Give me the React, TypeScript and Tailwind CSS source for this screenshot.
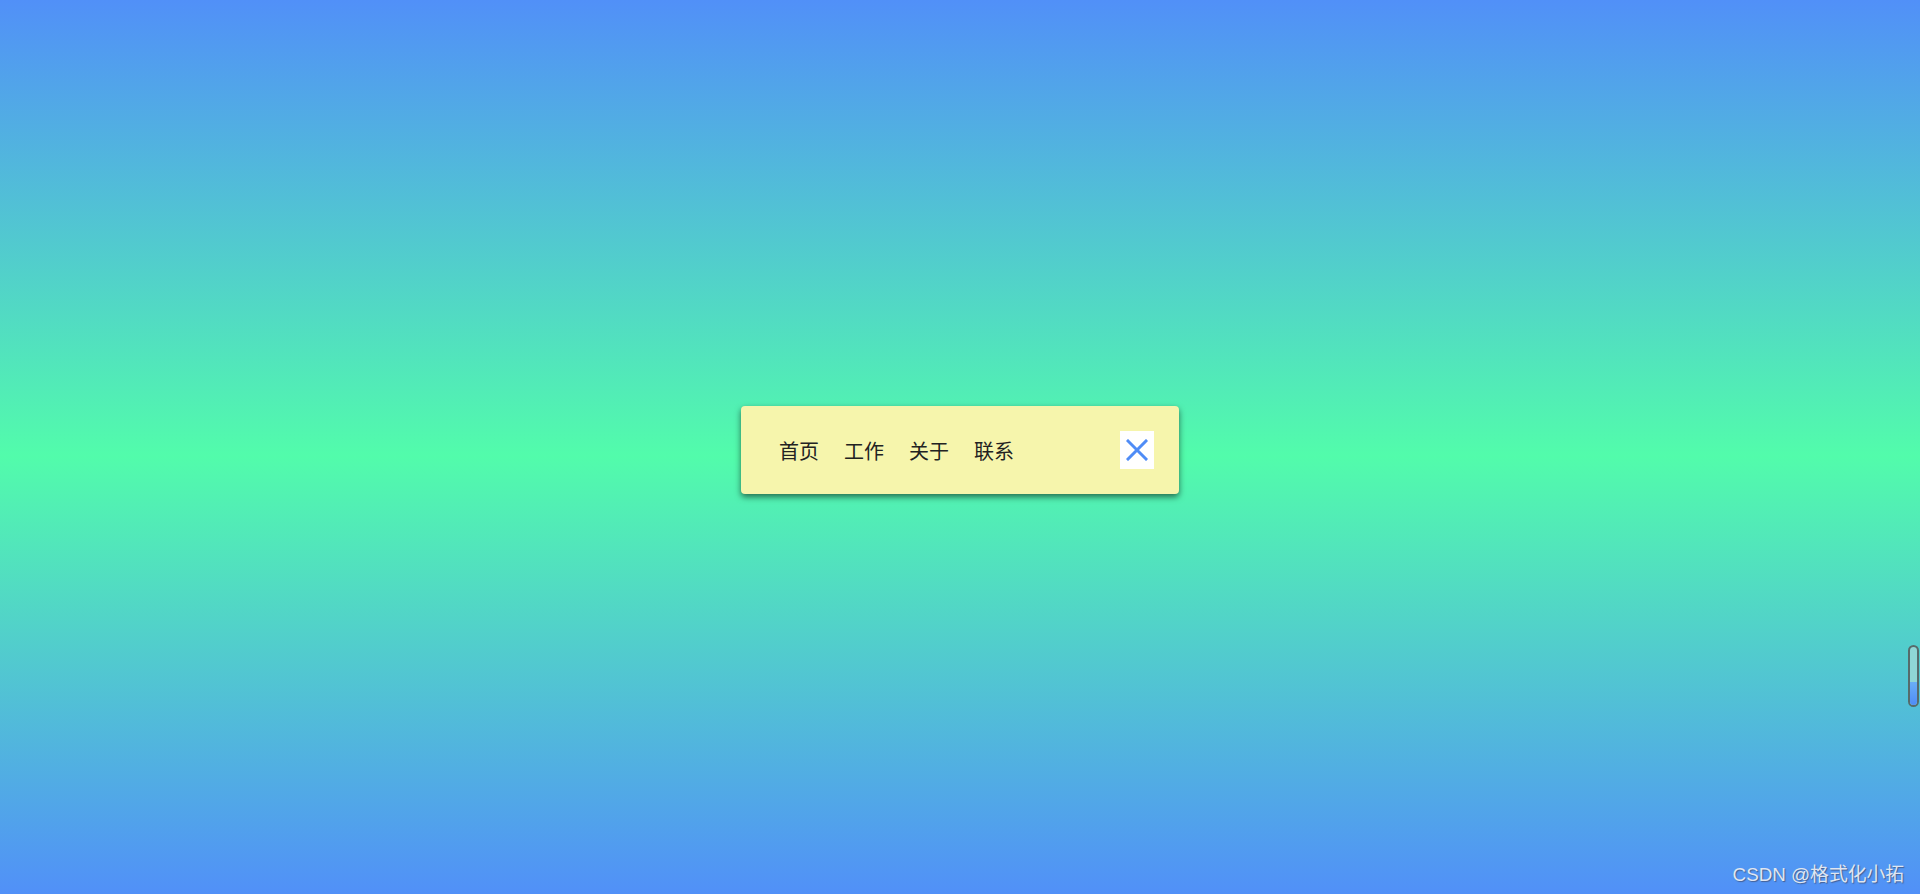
import React from "react";

export default function App() {
  const links = ["首页", "工作", "关于", "联系"];
  return (
    <div
      className="relative w-full h-[894px] overflow-hidden bg-[linear-gradient(to_bottom,#5190f8_0%,#52fcab_51%,#5190f8_100%)]"
      style={{ fontFamily: '"Noto Sans CJK SC", "Noto Sans", sans-serif' }}
    >
      <div className="flex justify-center pt-[406px]">
        <div className="flex items-center w-[438px] h-[88px] bg-[#f6f5ac] rounded-[4px] shadow-[0_3px_6px_rgba(0,0,0,0.55)] pl-[38px] pr-[25px]">
          <nav className="flex items-center gap-[25px]">
            {links.map((l) => (
              <a key={l} className="text-[20px] leading-none text-[#222] cursor-pointer mt-[2px]">
                {l}
              </a>
            ))}
          </nav>
          <button className="ml-auto w-[34px] h-[38px] bg-white flex items-center justify-center">
            <svg width="22" height="22" viewBox="0 0 22 22">
              <path d="M2 2 L20 20 M20 2 L2 20" stroke="#4f8cf6" strokeWidth="3" strokeLinecap="square" />
            </svg>
          </button>
        </div>
      </div>

      <div className="absolute right-[1px] top-[645px] w-[11px] h-[62px] rounded-full border-2 border-[#566b6b] overflow-hidden bg-[#8fd6d6] flex flex-col justify-end">
        <div className="h-[23px] w-full bg-[linear-gradient(to_bottom,#6aaef6,#4f8cf6)]" />
      </div>

      <div
        className="absolute right-[16px] bottom-[9px] text-[18.8px] leading-none text-[#dfe6f2] [text-shadow:1px_1px_1px_rgba(60,60,80,0.6)]"
        style={{ fontFamily: '"Liberation Sans", "Noto Sans CJK SC", sans-serif' }}
      >
        CSDN @格式化小拓
      </div>
    </div>
  );
}
